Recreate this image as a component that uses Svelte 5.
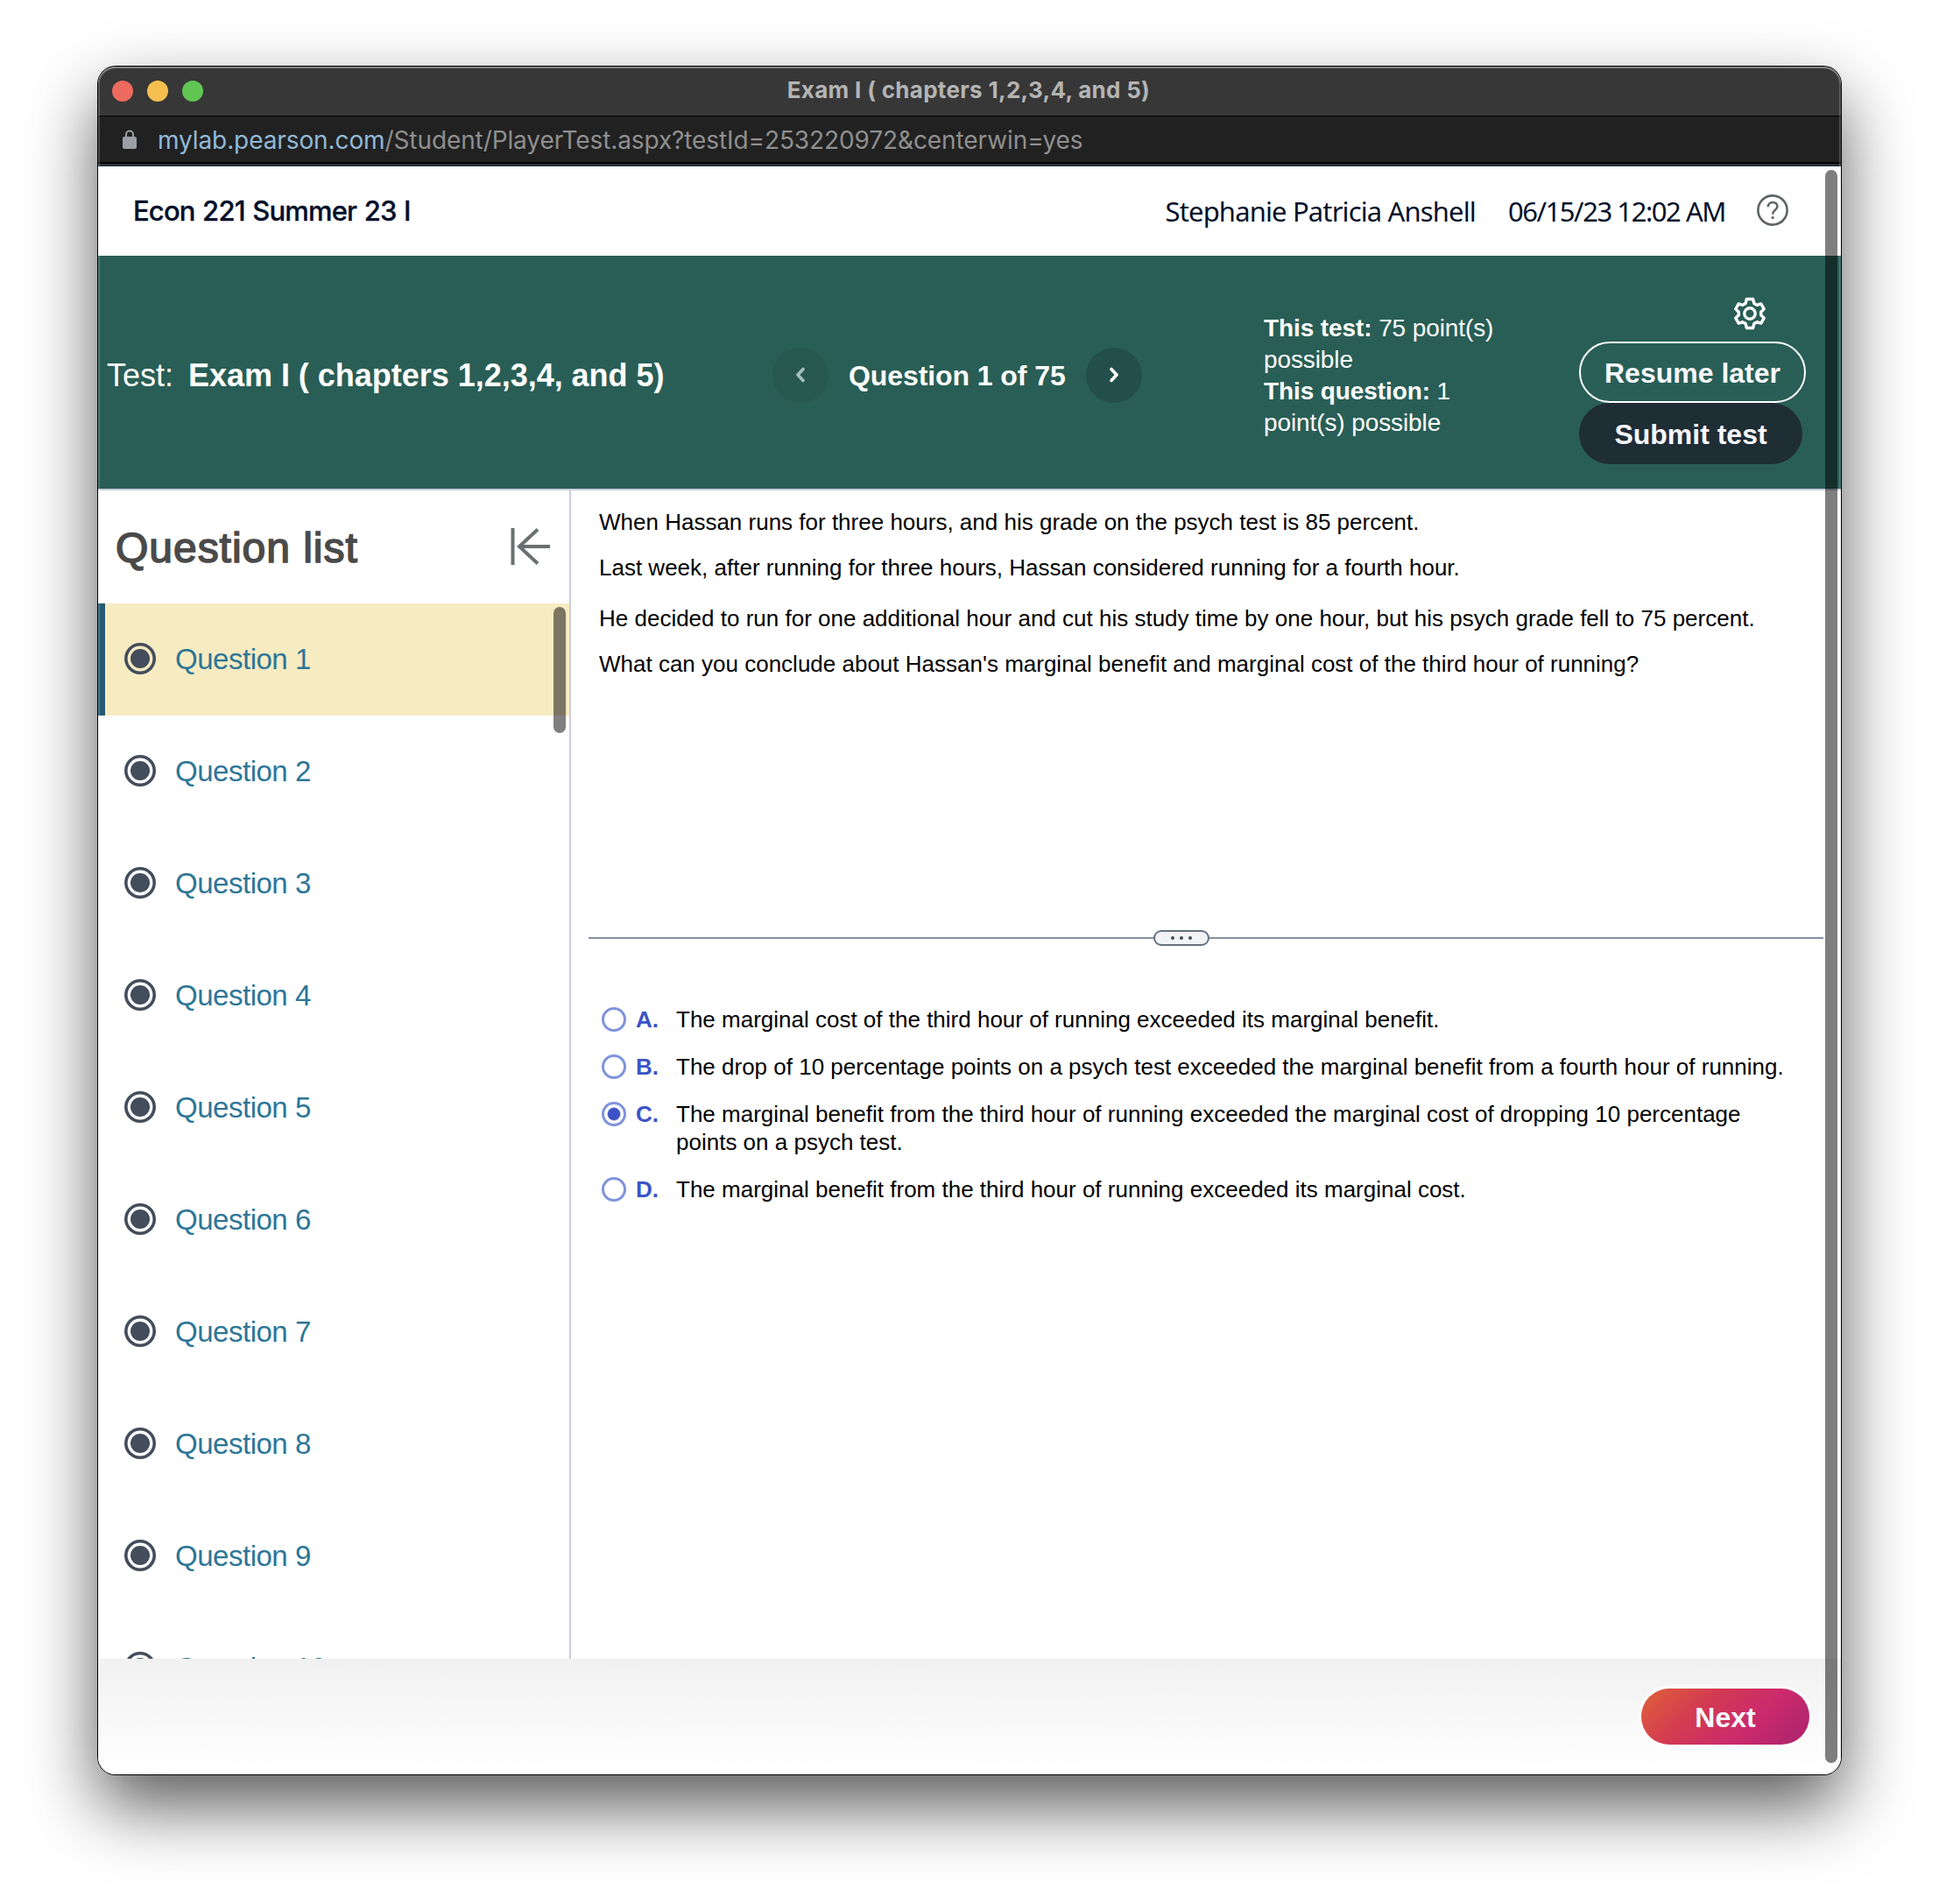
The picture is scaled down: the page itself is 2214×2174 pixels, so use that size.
<script>
    let selected = $state(1);
    let answer = $state("C");

    const title = "Exam I ( chapters 1,2,3,4, and 5)";
    const domain = "mylab.pearson.com";
    const path = "/Student/PlayerTest.aspx?testId=253220972&centerwin=yes";
    const questions = Array.from({ length: 10 }, (_, i) => i + 1);

    const choices = [
        { id: "A", text: "The marginal cost of the third hour of running exceeded its marginal benefit." },
        { id: "B", text: "The drop of 10 percentage points on a psych test exceeded the marginal benefit from a fourth hour of running." },
        { id: "C", text: "The marginal benefit from the third hour of running exceeded the marginal cost of dropping 10 percentage points on a psych test." },
        { id: "D", text: "The marginal benefit from the third hour of running exceeded its marginal cost." }
    ];
</script>

<div class="desktop">
    <div class="window">
        <div class="titlebar">
            <div class="lights">
                <span class="light red"></span>
                <span class="light yellow"></span>
                <span class="light green"></span>
            </div>
            <div class="window-title">{title}</div>
        </div>

        <div class="addressbar">
            <svg class="lock" width="16" height="22" viewBox="0 0 16 22">
                <path d="M4 9V5.5a4 4 0 0 1 8 0V9" fill="none" stroke="#9aa0a6" stroke-width="2" />
                <rect x="0" y="8" width="16" height="14" rx="2" fill="#9aa0a6" />
            </svg>
            <span class="domain">{domain}</span><span class="path">{path}</span>
        </div>

        <header class="course">
            <h1>Econ 221 Summer 23 I</h1>
            <span class="student">Stephanie Patricia Anshell</span>
            <span class="date">06/15/23 12:02 AM</span>
            <svg class="help" width="36" height="36" viewBox="0 0 36 36" fill="none" stroke="#5d6465">
                <circle cx="18" cy="18" r="16.6" stroke-width="2.6" />
                <path d="M12.8 14.2c0-3.2 2.3-5.3 5.3-5.3s5.3 2 5.3 4.8c0 4-5.2 4.4-5.2 8.2v.8" stroke-width="2.5" />
                <circle cx="18.1" cy="26.6" r="1.6" fill="#5d6465" stroke="none" />
            </svg>
        </header>

        <section class="test-bar">
            <div class="test-name">Test: <strong>{title}</strong></div>
            <div class="pager">
                <button class="round disabled" aria-label="Previous question">
                    <svg width="12" height="18" viewBox="0 0 12 18"><path d="M9 2.5 3 9l6 6.5" /></svg>
                </button>
                <strong>Question 1 of 75</strong>
                <button class="round" aria-label="Next question">
                    <svg width="12" height="18" viewBox="0 0 12 18"><path d="M3 2.5 9 9l-6 6.5" /></svg>
                </button>
            </div>
            <div class="points">
                <div><b>This test:</b> 75 point(s) possible</div>
                <div><b>This question:</b> 1 point(s) possible</div>
            </div>
            <div class="actions">
                <div class="gear">
                    <svg width="36" height="38" viewBox="0 0 36 38" fill="none" stroke="#fff" stroke-width="3.4" stroke-linejoin="round">
                        <path d="M14.4 2.5h7.2l1.3 5 3.2 1.8 4.7-1.4 3.4 6-3.5 3.4v3.4l3.5 3.4-3.4 6-4.7-1.4-3.2 1.8-1.3 5h-7.2l-1.3-5-3.2-1.8-4.7 1.4-3.4-6 3.5-3.4v-3.4l-3.5-3.4 3.4-6 4.7 1.4 3.2-1.8z" />
                        <circle cx="18" cy="19" r="6.2" />
                    </svg>
                </div>
                <button class="resume">Resume later</button>
                <button class="submit">Submit test</button>
            </div>
        </section>

        <div class="body">
            <aside>
                <div class="list-head">
                    <h2>Question list</h2>
                    <svg width="46" height="42" viewBox="0 0 46 42" fill="none" stroke="#6a7070" stroke-width="4">
                        <path d="M2.5 0v42M45 21H11M31 1.5 10 21l21 19.5" />
                    </svg>
                </div>
                <ul>
                    {#each questions as n}
                        <li class:active={n === selected}>
                            <button onclick={() => (selected = n)}>
                                <svg width="36" height="36" viewBox="0 0 36 36">
                                    <circle cx="18" cy="18" r="16.2" fill="none" stroke="#434d5b" stroke-width="3.6" />
                                    <circle cx="18" cy="18" r="11" fill="#434d5b" />
                                </svg>
                                <span>Question {n}</span>
                            </button>
                        </li>
                    {/each}
                </ul>
                <div class="list-scroll"></div>
            </aside>

            <main>
                <div class="prompt">
                    <p>When Hassan runs for three hours, and his grade on the psych test is 85 percent.</p>
                    <p>Last week, after running for three hours, Hassan considered running for a fourth hour.</p>
                    <p class="gap">He decided to run for one additional hour and cut his study time by one hour, but his psych grade fell to 75 percent.</p>
                    <p>What can you conclude about Hassan's marginal benefit and marginal cost of the third hour of running?</p>
                </div>

                <div class="divider">
                    <div class="handle"><i></i><i></i><i></i></div>
                </div>

                <div class="choices">
                    {#each choices as choice}
                        <label>
                            <input type="radio" name="answer" value={choice.id} bind:group={answer} />
                            <b>{choice.id}.</b>
                            <span>{choice.text}</span>
                        </label>
                    {/each}
                </div>
            </main>
        </div>

        <footer>
            <button class="next">Next</button>
        </footer>

        <div class="page-scroll"></div>
        <div class="edge"></div>
    </div>
</div>

<style>
    :global(body) { background: #fff; }
    * { box-sizing: border-box; }
    button { border: 0; padding: 0; background: none; font: inherit; color: inherit; cursor: pointer; }
    h1, h2, p, ul { margin: 0; padding: 0; }

    .desktop {
        height: 2174px;
        padding: 76px 112px 0;
        overflow: hidden;
        font-family: "Liberation Sans", Arial, sans-serif;
    }
    .window {
        position: relative;
        display: flex;
        flex-direction: column;
        height: 1950px;
        border-radius: 20px;
        overflow: hidden;
        background: #fff;
        box-shadow: 0 0 0 1px #000, 0 36px 80px rgba(0, 0, 0, 0.65);
    }

    /* browser chrome */
    .titlebar {
        display: grid;
        grid-template-columns: 1fr auto 1fr;
        align-items: center;
        height: 57px;
        background: #373737;
        border-bottom: 1px solid #000;
    }
    .lights { display: flex; gap: 16px; padding-left: 16px; }
    .light { width: 24px; height: 24px; border-radius: 50%; }
    .red { background: #ed6a5e; }
    .yellow { background: #f4bf4f; }
    .green { background: #61c554; }
    .window-title {
        font: 700 26px/32px Inter, sans-serif;
        letter-spacing: 0.3px;
        color: #b4b4b4;
        padding: 0 2px 2px 0;
    }
    .addressbar {
        display: flex;
        align-items: center;
        height: 57px;
        padding: 0 28px;
        background: #212121;
        border-bottom: 3px solid #27323a;
        box-shadow: inset 0 -2px #050505;
        font: 400 28px/32px Inter, sans-serif;
        letter-spacing: -0.1px;
    }
    .lock { margin: -3px 24px 0 0; }
    .domain { color: #91b9d6; }
    .path { color: #8f8f8f; }

    .course {
        display: flex;
        align-items: center;
        flex: none;
        height: 102px;
        padding: 0 60px 0 40px;
        color: #05112a;
    }
    h1 { flex: 1; font: 500 31px/40px Inter, sans-serif; letter-spacing: -0.82px; word-spacing: 1px; -webkit-text-stroke: 0.3px #05112a; }
    .student, .date { font: 400 31px/40px "Noto Sans", sans-serif; letter-spacing: -0.87px; }
    .date { margin: 0 36px 0 37px; letter-spacing: -1.45px; }
    .help { margin-top: -2px; }

    .test-bar {
        display: grid;
        grid-template-columns: 770px 561px 360px auto;
        justify-content: start;
        align-items: center;
        flex: none;
        height: 268px;
        padding-top: 6px;
        background: #295e56;
        border-bottom: 2px solid #c9cdd9;
        color: #fff;
    }
    .test-name { padding: 2px 0 0 10px; font-size: 36px; letter-spacing: -0.02px; white-space: nowrap; }
    .test-name strong { margin-left: 7px; }
    .pager { display: flex; align-items: center; gap: 23px; font-size: 32px; letter-spacing: -0.08px; }
    .pager strong { padding-top: 2px; }
    .round {
        display: flex;
        align-items: center;
        justify-content: center;
        width: 64px;
        height: 63px;
        border-radius: 50%;
        background: #234e4c;
    }
    .round path { fill: none; stroke: #fff; stroke-width: 3.6; stroke-linecap: round; stroke-linejoin: round; }
    .round.disabled { background: #27584f; }
    .round.disabled path { stroke: #a5c0bc; }
    .points { width: 270px; padding-top: 2px; font-size: 28px; line-height: 36px; letter-spacing: -0.1px; }
    .actions { display: flex; flex-direction: column; align-items: flex-start; }
    .gear { display: flex; align-items: center; height: 64px; padding-left: 177px; }
    .resume, .submit { height: 70px; padding-top: 2px; border-radius: 35px; font-size: 32px; font-weight: 700; color: #f8f8ff; }
    .resume { width: 259px; border: 2px solid #fff; }
    .submit { width: 255px; background: #1f2d35; }

    .body { display: flex; height: 1334px; flex: none; }
    aside { position: relative; width: 540px; border-right: 2px solid #c9cdd9; overflow: hidden; }
    .list-head {
        display: flex;
        align-items: center;
        justify-content: space-between;
        height: 129px;
        padding: 0 21px 0 20px;
    }
    .list-head svg { margin-top: -2px; }
    h2 {
        padding-top: 2px;
        font-size: 48px;
        font-weight: 400;
        letter-spacing: 0.97px;
        color: #4a4a4a;
        -webkit-text-stroke: 1.6px #4a4a4a;
    }
    ul { list-style: none; }
    li { height: 128px; border-left: 8px solid transparent; }
    li.active { background: #f7ebc2; border-left-color: #265b73; }
    li button {
        display: flex;
        align-items: center;
        gap: 22px;
        width: 100%;
        height: 100%;
        padding: 0 0 2px 22px;
        font-size: 33px;
        letter-spacing: -0.48px;
        color: #2d7697;
    }
    li span { padding-top: 1px; }
    .list-scroll {
        position: absolute;
        top: 133px;
        right: 4px;
        width: 14px;
        height: 144px;
        border-radius: 7px;
        background: rgba(0, 0, 0, 0.5);
    }

    main { flex: 1; padding: 0 20px 0 20px; font-size: 26px; line-height: 32px; color: #000; }
    .prompt { height: 502px; padding: 20px 0 0 12px; }
    .prompt p { margin-bottom: 20px; white-space: nowrap; }
    .prompt .gap { margin-top: 26px; }
    .divider {
        display: flex;
        align-items: center;
        justify-content: center;
        height: 18px;
        width: 1410px;
        margin-right: -20px;
        padding-right: 56px;
        background: linear-gradient(#8490a2, #8490a2) 0 8px / 100% 2px no-repeat;
    }
    .handle {
        display: flex;
        align-items: center;
        justify-content: center;
        gap: 6px;
        width: 64px;
        height: 18px;
        border: 2px solid #66727f;
        border-radius: 9px;
        background: #f1f3f7;
    }
    .handle i { width: 4px; height: 4px; border-radius: 50%; background: #4a4a4a; }

    .choices { padding: 68px 0 0 15px; }
    label { display: flex; margin-bottom: 22px; }
    input {
        appearance: none;
        flex: none;
        width: 28px;
        height: 28px;
        margin: 2px 11px 0 0;
        border: 3px solid #7f94dc;
        border-radius: 50%;
        background: #fff;
    }
    input:checked { background: radial-gradient(circle, #3b53c6 6.5px, #fff 8px); }
    label b { flex: none; width: 46px; color: #3b53c6; }
    label span { max-width: 1280px; }

    footer {
        display: flex;
        justify-content: flex-end;
        flex: none;
        height: 132px;
        padding: 34px 36px 0 0;
        background: linear-gradient(#f1f1f1, #fff);
    }
    .next {
        width: 192px;
        height: 64px;
        padding-top: 2px;
        border-radius: 32px;
        background: linear-gradient(135deg, #dd5c3c 5%, #d33a52 35%, #cb2a6c 65%, #a9246f);
        box-shadow: 0 0 0 4px rgba(255, 255, 255, 0.5);
        font-size: 32px;
        font-weight: 700;
        color: #f8f8ff;
    }

    .page-scroll {
        position: absolute;
        top: 118px;
        right: 4px;
        width: 14px;
        height: 1819px;
        border-radius: 7px;
        background: rgba(0, 0, 0, 0.5);
    }
    /* light rim the system paints inside the window frame */
    .edge {
        position: absolute;
        inset: 0;
        border-radius: 20px;
        box-shadow: inset 0 2px rgba(255, 255, 255, 0.25), inset 0 0 0 2px rgba(255, 255, 255, 0.18);
        pointer-events: none;
    }
</style>
